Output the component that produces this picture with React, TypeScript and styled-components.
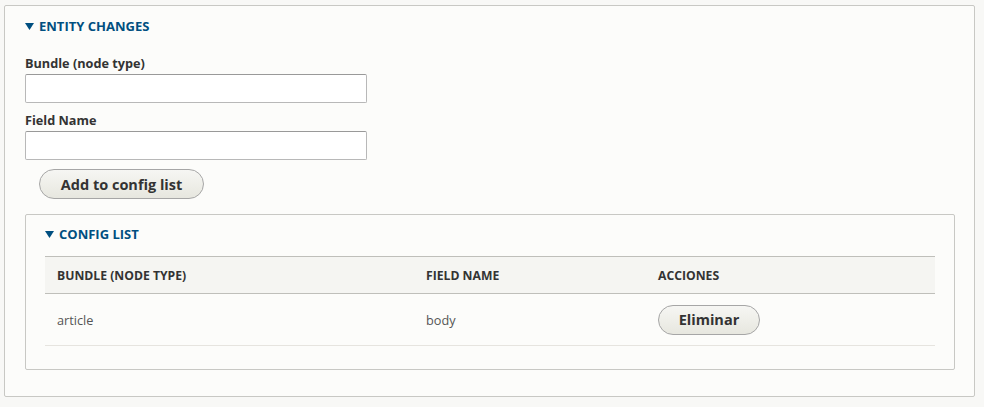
import styled, { createGlobalStyle } from 'styled-components';

const GlobalStyle = createGlobalStyle`
  html, body {
    margin: 0;
    padding: 0;
    background: #f8f8f6;
  }
  body {
    font-family: "Open Sans", "DejaVu Sans", sans-serif;
    color: #333;
    font-size: 13px;
  }
`

const Page = styled.div`
  padding: 5px 9px 10px 4px;
`
const Fieldset = styled.section<{ $inner?: boolean }>`
  border: 1px solid #c8c8c4;
  border-radius: 2px;
  background: #fcfcfa;
  padding: ${(p) => (p.$inner ? '10px 19px 23px 19px' : '11px 19px 26px 20px')};
  margin: ${(p) => (p.$inner ? '15px 0 0 0' : '0')};
`
const Summary = styled.div<{ $gap: number }>`
  display: flex;
  align-items: center;
  gap: 5px;
  color: #004f80;
  font-weight: 700;
  font-size: 13px;
  text-transform: uppercase;
  height: 18px;
  margin-bottom: ${(p) => p.$gap}px;
`
const Arrow = styled.svg`
  width: 9px;
  height: 7px;
  flex: none;
`
const FormItem = styled.div`
  display: flex;
  flex-direction: column;
  margin-bottom: 9px;
`
const Label = styled.label`
  font-weight: 700;
  font-size: 12.7px;
  color: #333;
  margin-bottom: 3px;
  line-height: 16px;
`
const TextInput = styled.input`
  width: 342px;
  height: 29px;
  box-sizing: border-box;
  border: 1px solid #b8b8b8;
  border-top-color: #999;
  border-radius: 2px;
  background: #fff;
  font-family: inherit;
`
const Button = styled.button<{ $w: number }>`
  width: ${(p) => p.$w}px;
  height: 30px;
  border: 1px solid #a6a6a6;
  border-radius: 20px;
  background: linear-gradient(to bottom, #f6f6f3, #e7e7df);
  font-family: inherit;
  font-weight: 700;
  font-size: 14.5px;
  color: #333;
  padding: 0;
`
const Actions = styled.div`
  padding-left: 14px;
`
const Table = styled.table`
  width: 100%;
  border-collapse: collapse;
  table-layout: fixed;
  font-size: 12.7px;
`
const Th = styled.th<{ $w?: string }>`
  box-sizing: border-box;
  text-align: left;
  font-weight: 700;
  text-transform: uppercase;
  color: #333;
  font-size: 12.2px;
  width: ${(p) => p.$w || 'auto'};
  padding: 0 12px;
  height: 37px;
  background: #f5f5f2;
  border-top: 1px solid #bfbfba;
  border-bottom: 1px solid #bfbfba;
`
const Td = styled.td`
  padding: 0 12px;
  height: 51px;
  color: #555;
  border-bottom: 1px solid #e6e4df;
`

function Caret() {
  return (
    <Arrow viewBox="0 0 9 7">
      <polygon points="0,0 9,0 4.5,7" fill="#004f80" />
    </Arrow>
  )
}

export default function App() {
  return (
    <Page>
      <GlobalStyle />
      <Fieldset>
        <Summary $gap={20}><Caret />Entity changes</Summary>
        <FormItem>
          <Label>Bundle (node type)</Label>
          <TextInput />
        </FormItem>
        <FormItem>
          <Label>Field Name</Label>
          <TextInput />
        </FormItem>
        <Actions>
          <Button $w={165}>Add to config list</Button>
        </Actions>
        <Fieldset $inner>
          <Summary $gap={13}><Caret />Config list</Summary>
          <Table>
            <thead>
              <tr>
                <Th $w="369px">Bundle (node type)</Th>
                <Th $w="232px">Field name</Th>
                <Th>Acciones</Th>
              </tr>
            </thead>
            <tbody>
              <tr>
                <Td>article</Td>
                <Td>body</Td>
                <Td><Button $w={102}>Eliminar</Button></Td>
              </tr>
            </tbody>
          </Table>
        </Fieldset>
      </Fieldset>
    </Page>
  )
}
